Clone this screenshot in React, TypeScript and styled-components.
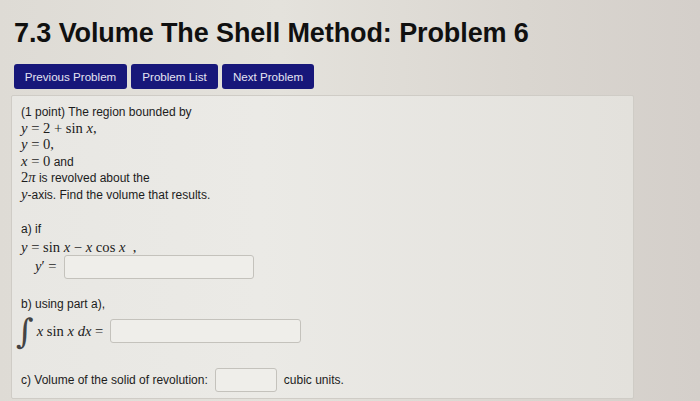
import React from "react";
import styled, { createGlobalStyle } from "styled-components";

const Global = createGlobalStyle`
  html, body { margin: 0; padding: 0; }
  body {
    width: 700px; height: 401px; overflow: hidden;
    background: linear-gradient(90deg, #dedbd5 0%, #e4e2dc 40%, #dad6d0 75%, #d4cfca 100%);
    font-family: "Liberation Sans", Arial, sans-serif;
    color: #1a1a1a;
  }
`;

const Page = styled.div`
  padding: 18px 0 0 14px;
  display: flex;
  flex-direction: column;
`;

const Title = styled.h1`
  margin: 0;
  font-size: 27px;
  font-weight: 700;
  color: #101010;
  line-height: 30px;
  letter-spacing: -0.1px;
`;

const Nav = styled.div`
  display: flex;
  gap: 4px;
  margin-top: 16px;
`;

const NavButton = styled.button<{ $w: number }>`
  width: ${(p) => p.$w}px;
  height: 25px;
  background: #17177a;
  color: #e4e4f2;
  border: none;
  border-radius: 3px;
  font-family: "Liberation Sans", Arial, sans-serif;
  font-size: 11.6px;
  padding: 0;
  display: flex;
  align-items: center;
  justify-content: center;
`;

const Problem = styled.div`
  margin-top: 6px;
  width: 623px;
  height: 304px;
  box-sizing: border-box;
  margin-left: -3px;
  background: linear-gradient(90deg, #e8e7e3 0%, #ebeae6 40%, #e3e1dc 100%);
  border: 1px solid #cfccc6;
  border-radius: 2px;
  padding: 8px 0 0 9px;
  font-size: 12px;
  line-height: 16.6px;
  color: #1c1c1c;
`;

const Line = styled.div<{ $mt?: number }>`
  height: 16.6px;
  line-height: 16.6px;
  white-space: nowrap;
  margin-top: ${(p) => p.$mt ?? 0}px;
`;

const M = styled.span`
  font-family: "Liberation Serif", "Times New Roman", serif;
  font-size: 14.6px;
  line-height: 1;
`;

const V = styled.i`
  font-family: "Liberation Serif", "Times New Roman", serif;
`;

const AnswerRow = styled.div<{ $indent: number; $mt: number; $h: number }>`
  display: flex;
  align-items: center;
  height: ${(p) => p.$h}px;
  margin-top: ${(p) => p.$mt}px;
  padding-left: ${(p) => p.$indent}px;
  gap: 7px;
`;

const Input = styled.div<{ $w: number }>`
  width: ${(p) => p.$w}px;
  height: 24px;
  box-sizing: border-box;
  background: #efeeea;
  border: 1px solid #c4c2bc;
  border-radius: 3px;
`;

const IntegralWrap = styled.span`
  display: flex;
  align-items: center;
  gap: 3px;
  margin-left: -5px;
`;

const Integral = styled.span`
  font-family: "DejaVu Serif", serif;
  font-size: 34px;
  line-height: 36px;
  height: 36px;
  color: #444;
`;

export default function App() {
  return (
    <>
      <Global />
      <Page>
        <Title>7.3 Volume The Shell Method: Problem 6</Title>
        <Nav>
          <NavButton $w={113}>Previous Problem</NavButton>
          <NavButton $w={87}>Problem List</NavButton>
          <NavButton $w={92}>Next Problem</NavButton>
        </Nav>
        <Problem>
          <Line>(1 point) The region bounded by</Line>
          <Line>
            <M><V>y</V> = 2 + sin <V>x</V>,</M>
          </Line>
          <Line>
            <M><V>y</V> = 0,</M>
          </Line>
          <Line>
            <M><V>x</V> = 0</M> and
          </Line>
          <Line>
            <M>2<V>π</V></M> is revolved about the
          </Line>
          <Line>
            <M><V>y</V></M>-axis. Find the volume that results.
          </Line>
          <Line $mt={17}>a) if</Line>
          <Line $mt={3}>
            <M><V>y</V> = sin <V>x</V> − <V>x</V> cos <V>x</V>&nbsp; ,</M>
          </Line>
          <AnswerRow $indent={14} $mt={-2} $h={24}>
            <M><V>y</V>′ =</M>
            <Input $w={190} />
          </AnswerRow>
          <Line $mt={17}>b) using part a),</Line>
          <AnswerRow $indent={0} $mt={1} $h={36}>
            <IntegralWrap>
              <Integral>∫</Integral>
              <M><V>x</V> sin <V>x</V> <V>dx</V> =</M>
            </IntegralWrap>
            <Input $w={191} />
          </AnswerRow>
          <AnswerRow $indent={0} $mt={19} $h={24}>
            <span>c) Volume of the solid of revolution:</span>
            <Input $w={62} />
            <span>cubic units.</span>
          </AnswerRow>
        </Problem>
      </Page>
    </>
  );
}
